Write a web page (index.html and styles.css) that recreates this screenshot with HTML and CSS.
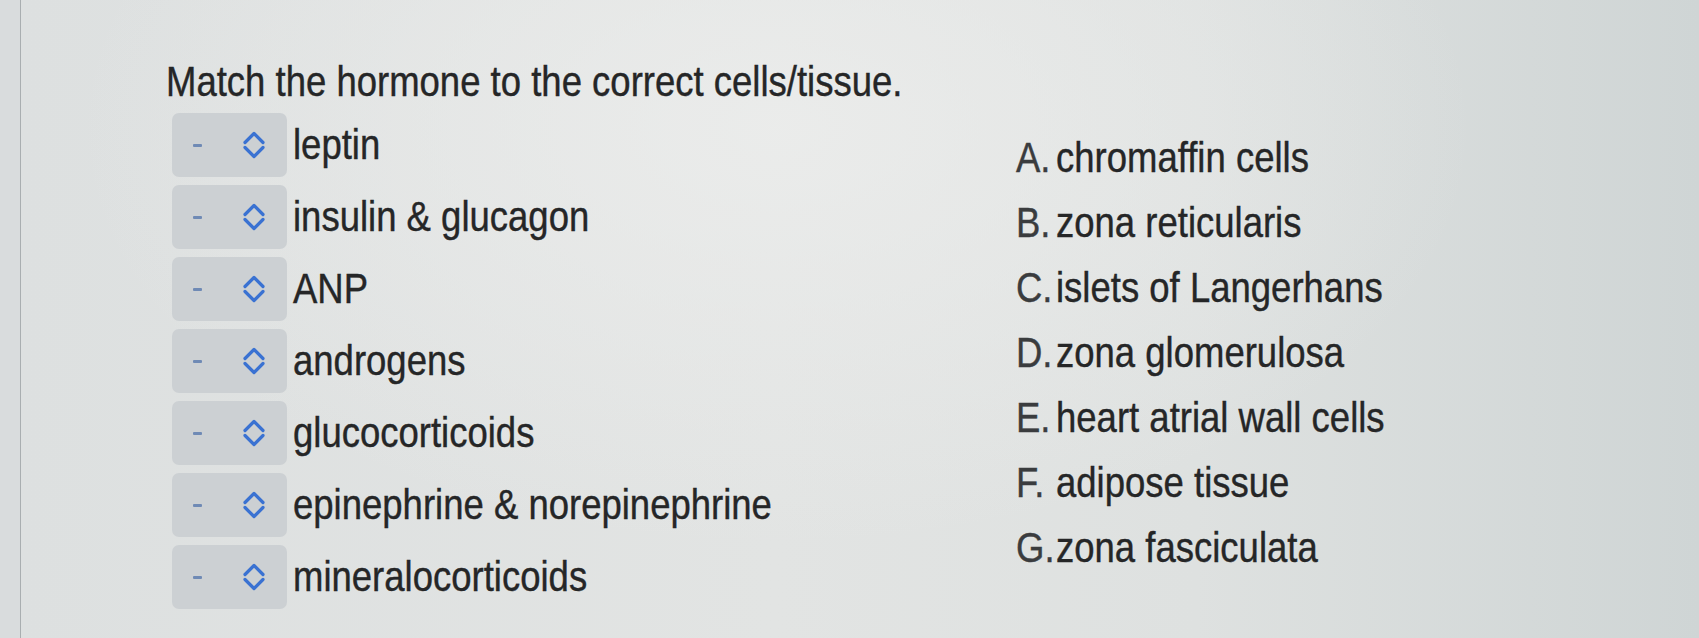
FILE: index.html
```html
<!DOCTYPE html>
<html lang="en">
<head>
<meta charset="utf-8">
<title>Matching question</title>
<link rel="stylesheet" href="styles.css">
</head>
<body>
<div class="screen">
  <div class="question">
    <h1 class="prompt">Match the hormone to the correct cells/tissue.</h1>
    <div class="columns">
      <ul class="hormones">
        <li class="hormone"><span class="picker"><span class="dash"></span><svg class="updown" viewBox="0 0 24 30"><path d="M3 12.5 L12 3.5 L21 12.5 M3 17.5 L12 26.5 L21 17.5"/></svg></span><span class="term">leptin</span></li>
        <li class="hormone"><span class="picker"><span class="dash"></span><svg class="updown" viewBox="0 0 24 30"><path d="M3 12.5 L12 3.5 L21 12.5 M3 17.5 L12 26.5 L21 17.5"/></svg></span><span class="term">insulin &amp; glucagon</span></li>
        <li class="hormone"><span class="picker"><span class="dash"></span><svg class="updown" viewBox="0 0 24 30"><path d="M3 12.5 L12 3.5 L21 12.5 M3 17.5 L12 26.5 L21 17.5"/></svg></span><span class="term">ANP</span></li>
        <li class="hormone"><span class="picker"><span class="dash"></span><svg class="updown" viewBox="0 0 24 30"><path d="M3 12.5 L12 3.5 L21 12.5 M3 17.5 L12 26.5 L21 17.5"/></svg></span><span class="term">androgens</span></li>
        <li class="hormone"><span class="picker"><span class="dash"></span><svg class="updown" viewBox="0 0 24 30"><path d="M3 12.5 L12 3.5 L21 12.5 M3 17.5 L12 26.5 L21 17.5"/></svg></span><span class="term">glucocorticoids</span></li>
        <li class="hormone"><span class="picker"><span class="dash"></span><svg class="updown" viewBox="0 0 24 30"><path d="M3 12.5 L12 3.5 L21 12.5 M3 17.5 L12 26.5 L21 17.5"/></svg></span><span class="term">epinephrine &amp; norepinephrine</span></li>
        <li class="hormone"><span class="picker"><span class="dash"></span><svg class="updown" viewBox="0 0 24 30"><path d="M3 12.5 L12 3.5 L21 12.5 M3 17.5 L12 26.5 L21 17.5"/></svg></span><span class="term">mineralocorticoids</span></li>
      </ul>
      <ol class="answers">
        <li class="answer"><span class="letter">A.</span><span class="choice">chromaffin cells</span></li>
        <li class="answer"><span class="letter">B.</span><span class="choice">zona reticularis</span></li>
        <li class="answer"><span class="letter">C.</span><span class="choice">islets of Langerhans</span></li>
        <li class="answer"><span class="letter">D.</span><span class="choice">zona glomerulosa</span></li>
        <li class="answer"><span class="letter">E.</span><span class="choice">heart atrial wall cells</span></li>
        <li class="answer"><span class="letter">F.</span><span class="choice">adipose tissue</span></li>
        <li class="answer"><span class="letter">G.</span><span class="choice">zona fasciculata</span></li>
      </ol>
    </div>
  </div>
</div>
</body>
</html>
```
FILE: styles.css
```css
html, body {
  margin: 0;
  padding: 0;
  height: 100%;
  overflow: hidden;
}

body {
  background: #d9dcdd;
  font-family: "Liberation Sans", Arial, Helvetica, sans-serif;
  color: #252627;
}

.screen {
  margin-left: 20px;
  height: 638px;
  border-left: 1px solid #a9aeb0;
  background:
    radial-gradient(ellipse 700px 420px at 45% 20%, rgba(236, 237, 236, 0.85), rgba(236, 237, 236, 0) 100%),
    linear-gradient(90deg, #dde0e0 0%, #e2e4e3 45%, #dee1e0 70%, #cfd5d5 100%);
}

.question {
  padding: 58px 0 0 145px;
}

/* the display font is set tall and slightly condensed */
.prompt,
.term,
.letter,
.choice {
  display: inline-block;
  transform: scaleY(1.18);
  -webkit-text-stroke: 0.35px currentColor;
}

.prompt {
  margin: 0;
  font-size: 36.5px;
  line-height: 48px;
  font-weight: 400;
  transform-origin: left center;
}

.columns {
  display: flex;
  margin-top: 7px;
}

.hormones {
  list-style: none;
  margin: 0 0 0 6px;
  padding: 0;
  width: 844px;
  flex: 0 0 844px;
  display: flex;
  flex-direction: column;
  gap: 8px;
}

.hormone {
  display: flex;
  align-items: center;
  gap: 6px;
  height: 64px;
}

.picker {
  box-sizing: border-box;
  flex: 0 0 115px;
  height: 64px;
  border-radius: 7px;
  background: #ccd0d3;
  display: flex;
  align-items: center;
  padding-left: 21px;
}

.dash {
  flex: 0 0 9px;
  height: 3px;
  background: #6f8ab5;
  border-radius: 1px;
  margin-right: 40px;
}

.updown {
  flex: 0 0 24px;
  width: 24px;
  height: 30px;
  fill: none;
  stroke: #3a72d2;
  stroke-width: 3.2;
  stroke-linecap: round;
  stroke-linejoin: round;
}

.term {
  font-size: 36.5px;
  line-height: 48px;
  transform-origin: left center;
}

.answers {
  list-style: none;
  margin: 12px 0 0 0;
  padding: 0;
  display: flex;
  flex-direction: column;
}

.answer {
  display: flex;
  align-items: center;
  height: 65px;
  font-size: 36.5px;
}

.letter {
  width: 40px;
  color: #3a3c3e;
  transform-origin: left center;
}

.choice {
  transform-origin: left center;
}
```
